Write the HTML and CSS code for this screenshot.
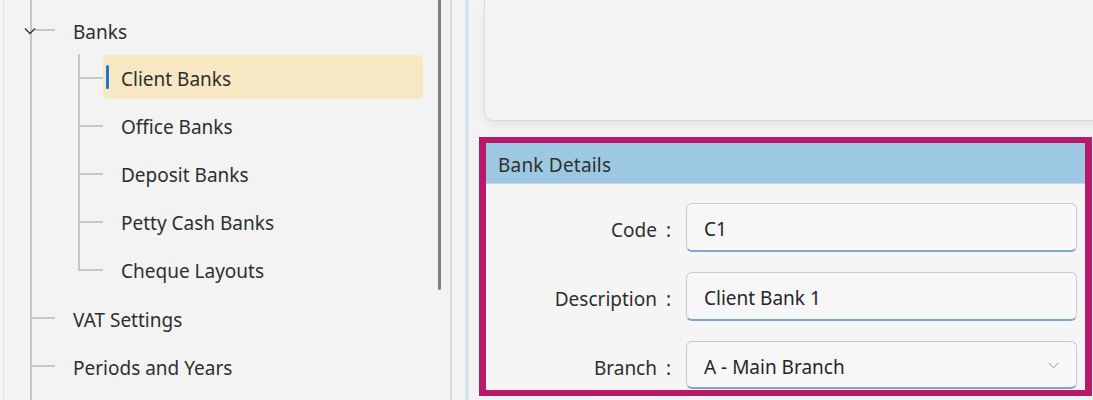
FILE: index.html
```html
<!DOCTYPE html>
<html lang="en">
<head>
    <meta charset="UTF-8">
    <meta name="viewport" content="width=device-width, initial-scale=1.0">
    <title>Bank Settings</title>
    <link rel="stylesheet" href="styles.css">
</head>
<body>
    <div class="app">
        <aside class="sidebar">
            <div class="tree">
                <div class="node open">
                    <svg class="caret" width="12" height="8" viewBox="0 0 12 8">
                        <path d="M1 1.5 L6 6.5 L11 1.5" fill="none" stroke="#333" stroke-width="1.3"/>
                    </svg>
                    <span class="text label">Banks</span>
                </div>
                <div class="children">
                    <div class="leaf"><div class="item active"><span class="mark"></span><span class="text">Client Banks</span></div></div>
                    <div class="leaf"><div class="item"><span class="text">Office Banks</span></div></div>
                    <div class="leaf"><div class="item"><span class="text">Deposit Banks</span></div></div>
                    <div class="leaf"><div class="item"><span class="text">Petty Cash Banks</span></div></div>
                    <div class="leaf"><div class="item"><span class="text">Cheque Layouts</span></div></div>
                </div>
                <div class="node"><span class="text">VAT Settings</span></div>
                <div class="node"><span class="text">Periods and Years</span></div>
            </div>
            <div class="scrollbar"><div class="thumb"></div></div>
        </aside>
        <div class="splitter"></div>
        <main class="content">
            <div class="card"></div>
            <section class="details">
                <div class="details-head"><span class="text">Bank Details</span></div>
                <div class="form">
                    <label class="field-label text">Code</label>
                    <span class="colon text">:</span>
                    <div class="field"><span class="text">C1</span></div>

                    <label class="field-label text">Description</label>
                    <span class="colon text">:</span>
                    <div class="field"><span class="text">Client Bank 1</span></div>

                    <label class="field-label text">Branch</label>
                    <span class="colon text">:</span>
                    <div class="field select">
                        <span class="text">A - Main Branch</span>
                        <svg width="11" height="7" viewBox="0 0 11 7">
                            <path d="M0.5 0.8 L5.5 5.8 L10.5 0.8" fill="none" stroke="#8a9db0" stroke-width="1"/>
                        </svg>
                    </div>
                </div>
            </section>
        </main>
    </div>
</body>
</html>
```

FILE: styles.css
```css
body {
    margin: 0;
    background: #f3f3f3;
    font-family: "Noto Sans", "Open Sans", sans-serif;
    color: #2e2e2e;
    overflow: hidden;
}
.app {
    display: flex;
    height: 400px;
}
.text {
    margin-top: 4px;
}
.sidebar {
    display: flex;
    margin-left: 3px;
    width: 446px;
    flex-shrink: 0;
    border-left: 1px solid #e0e0e0;
    border-right: 2px solid #d9d9e1;
}
.tree {
    width: 434px;
    padding-top: 6px;
    font-size: 19px;
    background: linear-gradient(#c3c6cb, #c3c6cb) 26px 0 / 2px 100% no-repeat;
}
.node {
    height: 48px;
    display: flex;
    align-items: center;
    padding-left: 69px;
    background: linear-gradient(#c3c6cb, #c3c6cb) 28px 23px / 23px 2px no-repeat;
}
.node.open {
    padding-left: 0;
    background: linear-gradient(#c3c6cb, #c3c6cb) 31px 23px / 20px 2px no-repeat;
}
.caret {
    margin-left: 20px;
    margin-top: 1px;
}
.node.open .label {
    margin-left: 37px;
}
.children {
    background: linear-gradient(#c3c6cb, #c3c6cb) 74px 0 / 2px 217px no-repeat;
}
.leaf {
    height: 48px;
    display: flex;
    align-items: center;
    padding-left: 99px;
    background: linear-gradient(#c3c6cb, #c3c6cb) 76px 23px / 23px 2px no-repeat;
}
.item {
    box-sizing: border-box;
    width: 320px;
    height: 44px;
    margin-top: -2px;
    display: flex;
    align-items: center;
    padding-left: 18px;
    border-radius: 5px;
}
.item.active {
    background: #f7e8c3;
    padding-left: 3px;
}
.mark {
    width: 3px;
    height: 24px;
    border-radius: 2px;
    background: #1f78c8;
    margin-right: 12px;
}
.scrollbar {
    width: 12px;
}
.thumb {
    width: 3px;
    height: 290px;
    background: #7f7f7f;
    border-radius: 0 0 2px 2px;
}
.splitter {
    width: 13px;
    flex-shrink: 0;
    background: #f4f4f4;
    border-right: 4px solid #d8e2ec;
}
.content {
    flex: 1;
    padding-left: 10px;
    overflow: hidden;
}
.card {
    box-sizing: border-box;
    margin-left: 5px;
    width: 700px;
    height: 121px;
    border: 1px solid #dadae2;
    border-top: none;
    border-radius: 0 0 9px 9px;
    background: #f3f3f3;
    box-shadow: 0 4px 8px rgba(0, 0, 0, 0.06);
}
.details {
    box-sizing: border-box;
    margin-top: 16px;
    width: 613px;
    height: 259px;
    border-style: solid;
    border-color: #b9186b;
    border-width: 6px 7px;
    background: #f5f5f5;
}
.details-head {
    height: 40px;
    padding-left: 12px;
    display: flex;
    align-items: center;
    background: #9dc8e4;
    border-bottom: 1px solid #cdd5e2;
    font-size: 19px;
    letter-spacing: 0.2px;
    color: #2f2f2f;
}
.form {
    display: grid;
    grid-template-columns: 171px 29px 391px;
    grid-auto-rows: 49px;
    row-gap: 20px;
    align-items: center;
    padding-top: 19px;
    font-size: 19px;
}
.field-label {
    text-align: right;
}
.colon {
    padding-left: 9px;
}
.field {
    box-sizing: border-box;
    height: 49px;
    display: flex;
    align-items: center;
    padding: 0 17px;
    border: 1px solid #b9cfe1;
    border-bottom: 2px solid #80a7c8;
    border-radius: 6px;
    background: #f7f7f7;
    color: #262626;
}
.field.select {
    height: 48px;
    margin-top: -1px;
    justify-content: space-between;
}
.field.select svg {
    margin-top: 2px;
}
```
